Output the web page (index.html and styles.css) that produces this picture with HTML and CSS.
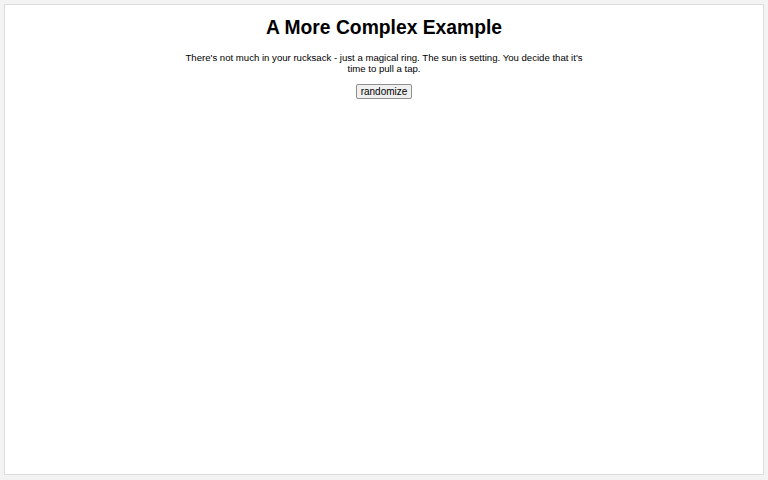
FILE: index.html
```html
<!DOCTYPE html>
<html>
<head>
<meta charset="utf-8">
<link rel="stylesheet" href="styles.css">
</head>
<body>
<div class="panel">
  <h1 class="title">A More Complex Example</h1>
  <p class="story">There's not much in your rucksack - just a magical ring. The sun is setting. You decide that it's time to pull a tap.</p>
  <button class="btn">randomize</button>
</div>
</body>
</html>
```
FILE: styles.css
```css
html, body { margin: 0; padding: 0; height: 100%; }
body {
  background: #f3f3f3;
  font-family: "Liberation Sans", Arial, sans-serif;
  padding: 4px 4px 5px 4px;
  box-sizing: border-box;
}
.panel {
  background: #fff;
  border: 1px solid #dcdcdc;
  height: 100%;
  box-sizing: border-box;
  display: flex;
  flex-direction: column;
  align-items: center;
  padding-top: 12px;
}
.title {
  font-size: 19.3px;
  font-weight: bold;
  margin: 0 0 13px 0;
  line-height: 22px;
}
.story {
  font-size: 9.6px;
  line-height: 11px;
  width: 400px;
  text-align: center;
  margin: 0 0 10px 0;
}
.btn {
  font-family: "Liberation Sans", Arial, sans-serif;
  font-size: 10px;
  padding: 1px 4px;
  background: #f0f0f0;
  border: 1px solid #8f8f8f;
  border-radius: 2px;
  color: #000;
}
```
